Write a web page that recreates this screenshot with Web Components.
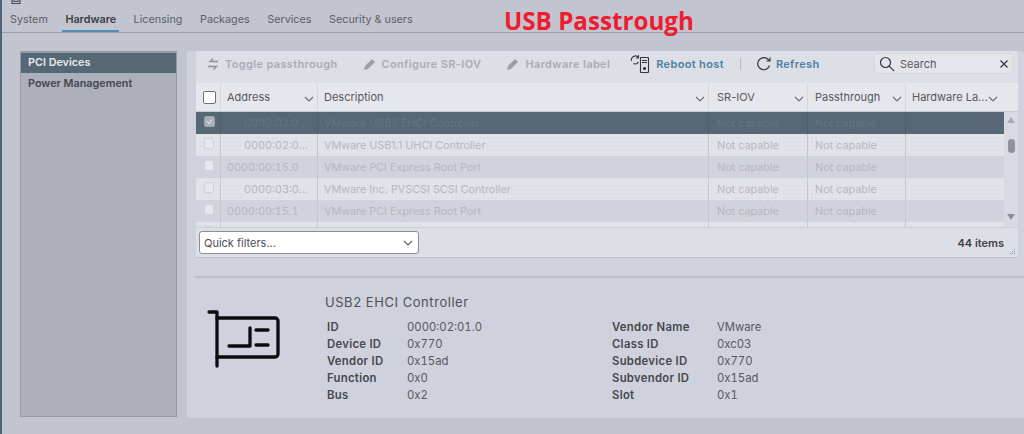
<!doctype html>
<html><head><meta charset="utf-8"><style>
html,body{margin:0;height:434px;width:1024px;overflow:hidden;background:#c2c4d0;font-family:Inter,"Open Sans",sans-serif}
esx-app{display:block}
</style></head><body>
<esx-app></esx-app>
<script>
const CHEV='<svg width="10" height="6" viewBox="0 0 10 6"><path d="M1 1l4 4 4-4" fill="none" stroke="currentColor" stroke-width="1.1"/></svg>';
const def=(n,html)=>customElements.define(n,class extends HTMLElement{connectedCallback(){if(this.shadowRoot)return;this.attachShadow({mode:'open'}).innerHTML=html;}});
def('esx-tabs',`<style>
:host{display:flex;height:29px;box-sizing:border-box;border-bottom:1px solid #9a9ea9;padding-left:8px;font-size:10.8px;color:#5b5e65;position:relative}
span{display:block;height:28px;padding-top:5px;box-sizing:border-box;margin-right:17.5px;line-height:22px;white-space:nowrap}
.on{color:#3b3e44;font-weight:600;border-bottom:2px solid #4f8fb3;height:28px;padding:5px 3px 0;margin:0 14.5px 0 -3px}
h1{position:absolute;left:502px;top:4px;margin:0;font:700 24.2px/26px "Open Sans",sans-serif;color:#ee1c2e;white-space:nowrap}
</style><span>System</span><span class="on">Hardware</span><span>Licensing</span><span>Packages</span><span>Services</span><span>Security &amp; users</span><h1>USB Passtrough</h1>`);
def('esx-side',`<style>
:host{display:block;width:157px;height:366px;box-sizing:border-box;background:#adafbb;border:1px solid #989ba6;border-top-width:2px;font-size:10.8px;font-weight:600;color:#44474d;flex:none}
div{height:20px;line-height:22px;padding-left:7px}
.on{background:#566875;color:#e8eaee;line-height:20px}
</style><div class="on">PCI Devices</div><div>Power Management</div>`);
const I={
toggle:'<svg width="14" height="14" viewBox="0 0 14 14" fill="none" stroke="#8d8f99" stroke-width="1.3"><path d="M7 1.500L4 4.500h8M2 9.500h8.500L7.500 12.500"/></svg>',
pencil:'<svg width="14" height="14" viewBox="0 0 14 14"><path d="M1 13l1-4 7-7 3 3-7 7z" fill="#9c9ea8"/></svg>',
reboot:'<svg width="22" height="20" viewBox="0 0 22 20" fill="none" stroke="#33363c" stroke-width="1.1"><path d="M1.500 7a4 4 0 0 1 7-3.500M8.500 1v3H6"/><path d="M8.500 8a4 4 0 0 1-5 1.500"/><rect x="10.500" y="3.500" width="8" height="15" rx=".5" fill="#dddfe7"/><path d="M12 6.500h5M12 8.500h5"/><circle cx="14.500" cy="14.500" r="1" fill="#33363c"/></svg>',
refresh:'<svg width="16" height="16" viewBox="0 0 16 16" fill="none" stroke="#33363c" stroke-width="1.2"><path d="M13.500 9.500A6 6 0 1 1 11.500 3L14 5"/><path d="M14 1.500V5h-3.500"/></svg>',
search:'<svg width="16" height="16" viewBox="0 0 16 16" fill="none" stroke="#33363c" stroke-width="1.2"><circle cx="6.500" cy="6.500" r="5"/><path d="M10.200 10.200l5 5"/></svg>',
close:'<svg width="8" height="8" viewBox="0 0 8 8" fill="none" stroke="#33363c" stroke-width="1.200"><path d="M.5.5l7 7M7.500.5l-7 7"/></svg>'};
def('esx-toolbar',`<style>
:host{display:flex;align-items:center;height:32px;box-sizing:border-box;padding:0 0 7px 10px;background:#dddfe7;font-size:11px;font-weight:600;letter-spacing:.35px;color:#aaacb6;white-space:nowrap;position:relative}
.b{display:flex;align-items:center;gap:5px}
.b.a{color:#4a7f9f}
.sep{width:1px;height:12px;background:#b4b6c0;margin:0 15px 0 16px}
.s{position:absolute;left:678px;top:2px;width:139px;height:21px;background:#e4e5eb;border:1px solid #d4d6de;border-radius:3px;display:flex;align-items:center;box-sizing:border-box;padding:0 4px;gap:5px;color:#55585f;font-weight:400;letter-spacing:0}
.s b{font-weight:400;flex:1}
</style>
<span class="b" style="margin-right:25px">${I.toggle}Toggle passthrough</span>
<span class="b" style="margin-right:25px">${I.pencil}Configure SR-IOV</span>
<span class="b" style="margin-right:20px">${I.pencil}Hardware label</span>
<span class="b a" style="gap:4px">${I.reboot}Reboot host</span>
<span class="sep"></span>
<span class="b a" style="gap:4px">${I.refresh}Refresh</span>
<div class="s">${I.search}<b>Search</b>${I.close}</div>`);
def('esx-grid-head',`<style>
:host{display:grid;grid-template-columns:25px 97px 391px 99px 98px 97px;height:29px;background:#e6e7ed;border-bottom:1px solid #c9cbd4;box-sizing:border-box;font-size:11px;color:#55585f;padding-right:14px}
div{display:flex;align-items:center;justify-content:space-between;padding:0 3px 0 6px;border-right:1px solid #d5d7df;white-space:nowrap;min-width:0}
i{width:13px;height:13px;background:#fff;border:1px solid #6d7078;border-radius:2px;box-sizing:border-box;margin-left:1px}
svg{color:#6a6d75;margin-top:3px;flex:none}
</style><div><i></i></div><div>Address${CHEV}</div><div>Description${CHEV}</div><div style="padding-left:8px">SR-IOV${CHEV}</div><div style="padding-left:7px">Passthrough${CHEV}</div><div style="border:0;padding-right:5px">Hardware La...${CHEV}</div>`);
customElements.define('esx-row',class extends HTMLElement{connectedCallback(){if(this.shadowRoot)return;
const g=a=>this.getAttribute(a)||'';const nc=g('addr')?'Not capable':'';
this.attachShadow({mode:'open'}).innerHTML=`<style>
:host{display:grid;grid-template-columns:25px 97px 391px 99px 98px 97px;height:22px;box-sizing:border-box;font-size:10.8px;color:#b5b7c1;background:#e0e1e8 radial-gradient(#e5e6ec 35%,transparent 40%) 0 0/4px 4px}
:host([alt]){background:#d1d2db;background-image:none}
:host([sel]){background:#566875;color:#65747f}
div{display:flex;align-items:center;padding:0 6px;border-right:1px solid #c4c6d0;white-space:nowrap;overflow:hidden;min-width:0}
:host([sel]) div{border-right-color:#4f606c}
i{width:11px;height:11px;border:1px solid #d0d2da;background:#e6e7ed;border-radius:2px;box-sizing:border-box;margin:-4px 0 0 2px;display:flex}
:host([sel]) i{background:#a9afb7;border-color:#9da4ac}
.in{padding-left:${this.hasAttribute('indent')?'23px':'6px'};font-variant-numeric:tabular-nums}
</style><div><i>${this.hasAttribute('sel')?'<svg viewBox="0 0 9 9" width="9" height="9"><path d="M2 4.500l2 2 3-4" fill="none" stroke="#d6dade" stroke-width="1.300"/></svg>':''}</i></div><div class="in">${g('addr')}</div><div>${g('desc')}</div><div style="padding-left:8px">${nc}</div><div style="padding-left:7px">${nc}</div><div style="border:0"></div>`;}});
def('esx-scroll',`<style>
:host{display:flex;flex-direction:column;align-items:center;position:absolute;right:0;top:0;bottom:0;width:14px;background:#d8d9e1;box-sizing:border-box;padding-top:5px}
.u{border:4px solid transparent;border-bottom:6px solid #a7a9b3;border-top:0}
.d{border:4px solid transparent;border-top:6px solid #8d9099;border-bottom:0;position:absolute;bottom:7px}
.t{width:7px;height:14px;background:#8f929b;border-radius:4px;margin-top:16px}
</style><span class="u"></span><span class="t"></span><span class="d"></span>`);
def('esx-select',`<style>
:host{display:flex;align-items:center;justify-content:space-between;width:220px;height:23px;box-sizing:border-box;background:#fff;border:1px solid #8b8e98;border-radius:3px;font-size:11px;font-weight:400;color:#4b4e55;padding:0 5px 0 4px}
svg{color:#5a5d65}
</style>Quick filters...${CHEV}`);
def('esx-grid',`<style>
:host{display:block;margin-left:9px;width:822px;background:#dddfe7;border-bottom:1px solid #bfc1cb;border-radius:0 0 3px 3px;flex:none;height:206px}
.body{position:relative;height:115px;overflow:hidden;background:#dcdde5;padding-right:14px}
.foot{height:30px;display:flex;align-items:center;justify-content:space-between;padding:0 14px 0 3px;font-size:11px;font-weight:600;color:#3f4248;border-top:1px solid #cfd1da;box-sizing:border-box;position:relative}
.grip{position:absolute;right:2px;bottom:2px}
</style><esx-toolbar></esx-toolbar><esx-grid-head></esx-grid-head>
<div class="body">
<esx-row sel indent addr="0000:02:0..." desc="VMware USB2 EHCI Controller"></esx-row>
<esx-row indent addr="0000:02:0..." desc="VMware USB1.1 UHCI Controller"></esx-row>
<esx-row alt addr="0000:00:15.0" desc="VMware PCI Express Root Port"></esx-row>
<esx-row indent addr="0000:03:0..." desc="VMware Inc. PVSCSI SCSI Controller"></esx-row>
<esx-row alt addr="0000:00:15.1" desc="VMware PCI Express Root Port"></esx-row>
<esx-row></esx-row>
<esx-scroll></esx-scroll>
</div>
<div class="foot"><esx-select></esx-select><span>44 items</span><svg class="grip" width="7" height="7" viewBox="0 0 7 7" fill="#8d9099"><rect x="5" y="1" width="1" height="1"/><rect x="3" y="3" width="1" height="1"/><rect x="5" y="3" width="1" height="1"/><rect x="1" y="5" width="1" height="1"/><rect x="3" y="5" width="1" height="1"/><rect x="5" y="5" width="1" height="1"/></svg></div>`);
customElements.define('esx-kv',class extends HTMLElement{connectedCallback(){if(this.shadowRoot)return;
const pairs=JSON.parse(this.getAttribute('data'));const w=this.getAttribute('w');
this.attachShadow({mode:'open'}).innerHTML=`<style>
:host{display:grid;grid-template-columns:${w}px auto;grid-auto-rows:17.2px;font-size:11.3px;align-items:center;color:#55585f}
b{font-weight:600;color:#44474d;letter-spacing:.3px}
span{font-variant-numeric:tabular-nums}
</style>`+pairs.map(([k,v])=>`<b>${k}</b><span>${v}</span>`).join('');}});
def('esx-detail',`<style>
:host{display:flex;margin:18px 0 0 8px;border-top:2px solid #bcbec9;height:142px;box-sizing:border-box;flex:none}
svg{margin:32px 0 0 11px;flex:none}
.m{margin-left:45px}
h2{font-size:13px;font-weight:400;color:#4e5158;margin:15px 0 7px -2px;line-height:18px;letter-spacing:.55px}
.c{display:flex}
</style>
<svg width="76" height="58" viewBox="0 0 76 58" fill="none" stroke="#0c0c0e" stroke-width="3.300" stroke-linecap="round" stroke-linejoin="round"><path d="M3 2h8v54"/><path d="M11 8h58a3 3 0 0 1 3 3v33a3 3 0 0 1-3 3H11"/><path d="M23 36h21V18M50 20h12M50 35h12"/></svg>
<div class="m"><h2>USB2 EHCI Controller</h2><div class="c">
<esx-kv w="80" style="width:285px" data='[["ID","0000:02:01.0"],["Device ID","0x770"],["Vendor ID","0x15ad"],["Function","0x0"],["Bus","0x2"]]'></esx-kv>
<esx-kv w="105" data='[["Vendor Name","VMware"],["Class ID","0xc03"],["Subdevice ID","0x770"],["Subvendor ID","0x15ad"],["Slot","0x1"]]'></esx-kv>
</div></div>`);
def('esx-app',`<style>
:host{display:block;height:434px;border-left:2px solid #4d6274;box-sizing:border-box;overflow:hidden}
.t{height:4px;overflow:hidden;padding-left:9px;display:flex;align-items:flex-end}
.w{display:flex;gap:10px;padding:18px 0 0 18px}
.p{width:837px;height:367px;background:#cfd2dc;border-radius:3px;display:flex;flex-direction:column}
</style>
<div class="t"><svg width="10" height="4" viewBox="0 0 10 4" fill="none" stroke="#4a4d55" stroke-width="1.200"><path d="M1 0v3.500h8V0M3 0v1.500h4V0"/></svg></div>
<esx-tabs></esx-tabs>
<div class="w"><esx-side></esx-side><div class="p"><esx-grid></esx-grid><esx-detail></esx-detail></div></div>`);
</script>
</body></html>
